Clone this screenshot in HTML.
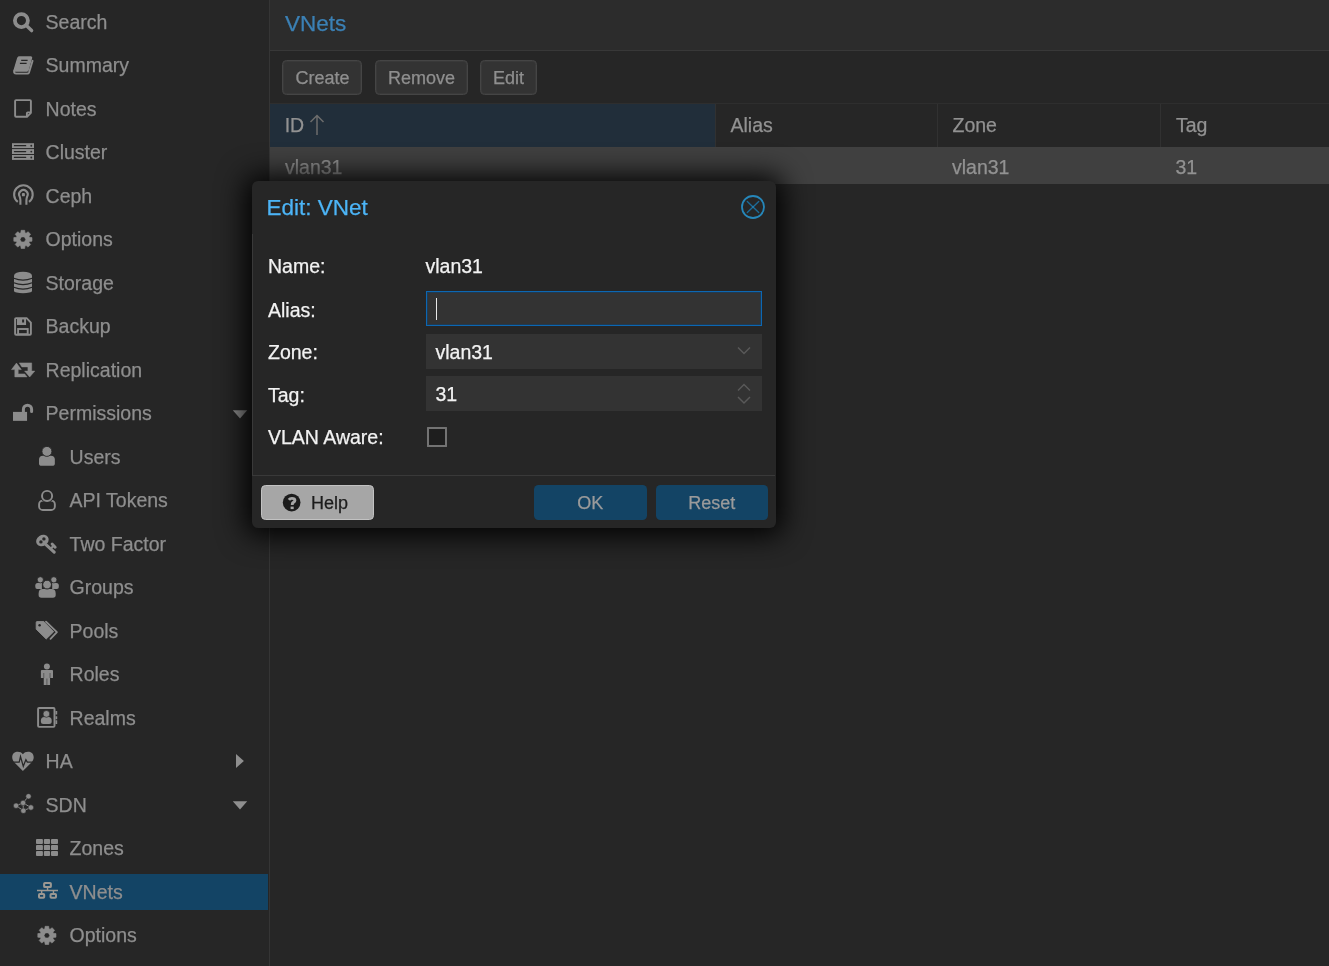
<!DOCTYPE html>
<html><head><meta charset="utf-8"><style>
*{margin:0;padding:0;box-sizing:border-box}
html,body{width:1329px;height:966px;overflow:hidden;background:#262626;font-family:"Liberation Sans",sans-serif}
.st,.gt,.lbl,.t,.btxt{-webkit-text-stroke:0.25px currentColor}
.abs{position:absolute}
.st{position:absolute;font-size:19.5px;line-height:19.5px;color:#8e8e8e;white-space:nowrap}
.ic{position:absolute;overflow:visible}
.sel{position:absolute;left:0;width:268px;height:36px;background:#134465}
#side{position:absolute;left:0;top:0;width:269px;height:966px;background:#262626}
#vb{position:absolute;left:269px;top:0;width:1px;height:966px;background:#353535}
#hdr{position:absolute;left:270px;top:0;width:1059px;height:51px;background:#2c2c2c;border-bottom:1px solid #383838}
.t{position:absolute;white-space:nowrap}
.btn{position:absolute;top:60px;height:35px;background:#333;border:1px solid #454545;box-shadow:inset 0 0 0 1px #393939;border-radius:4.5px}
.btxt{position:absolute;font-size:18px;line-height:18px;color:#8f8f8f;white-space:nowrap}
#gh{position:absolute;left:270px;top:103px;width:1059px;height:44px;background:#262626;border-top:1px solid #2e2e2e}
.hc{position:absolute;top:0;height:43px}
.sep{position:absolute;top:0;width:1px;height:43px;background:#313131}
#row{position:absolute;left:270px;top:147px;width:1059px;height:37px;background:#404040}
.gt{position:absolute;font-size:19.5px;line-height:19.5px;color:#929292;white-space:nowrap}
#dlg{position:absolute;left:251.5px;top:180.5px;width:524px;height:347px;background:#262626;border-radius:6px;box-shadow:0 1px 28px 7px rgba(0,0,0,0.95)}
.lbl{position:absolute;font-size:19.5px;line-height:19.5px;color:#f2f2f2;white-space:nowrap}
.inp{position:absolute;left:174.5px;width:336px;height:35px;background:#333}
.fbtn{position:absolute;top:304px;height:35px;border-radius:4.5px}
#wrap{position:absolute;left:0;top:0;width:1329px;height:966px;will-change:transform;background:#262626}
</style></head><body><div id="wrap">
<div id="side">
<div class="st" style="left:45.6px;top:12.59px">Search</div><div class="st" style="left:45.6px;top:56.09px">Summary</div><div class="st" style="left:45.6px;top:99.59px">Notes</div><div class="st" style="left:45.6px;top:143.09px">Cluster</div><div class="st" style="left:45.6px;top:186.59px">Ceph</div><div class="st" style="left:45.6px;top:230.09px">Options</div><div class="st" style="left:45.6px;top:273.59px">Storage</div><div class="st" style="left:45.6px;top:317.09px">Backup</div><div class="st" style="left:45.6px;top:360.59px">Replication</div><div class="st" style="left:45.6px;top:404.09px">Permissions</div><svg class="ic" style="left:232px;top:408.65px" width="16" height="10" viewBox="0 0 16 10"><path d="M0.8 1.2 H15.2 L8 9.5 Z" fill="#8f8f8f"/></svg><div class="st" style="left:69.6px;top:447.59px">Users</div><div class="st" style="left:69.6px;top:491.09px">API Tokens</div><div class="st" style="left:69.6px;top:534.59px">Two Factor</div><div class="st" style="left:69.6px;top:578.09px">Groups</div><div class="st" style="left:69.6px;top:621.59px">Pools</div><div class="st" style="left:69.6px;top:665.09px">Roles</div><div class="st" style="left:69.6px;top:708.59px">Realms</div><div class="st" style="left:45.6px;top:752.09px">HA</div><svg class="ic" style="left:235px;top:753.30px" width="10" height="16" viewBox="0 0 10 16"><path d="M1 1 V15 L8.9 8 Z" fill="#8f8f8f"/></svg><div class="st" style="left:45.6px;top:795.59px">SDN</div><svg class="ic" style="left:232px;top:800.15px" width="16" height="10" viewBox="0 0 16 10"><path d="M0.8 1.2 H15.2 L8 9.5 Z" fill="#8f8f8f"/></svg><div class="st" style="left:69.6px;top:839.09px">Zones</div><div class="sel" style="top:874.0px"></div><div class="st" style="left:69.6px;top:882.59px">VNets</div><div class="st" style="left:69.6px;top:926.09px">Options</div>
<svg class="ic" style="left:0;top:0" width="269" height="966" viewBox="0 0 269 966"><circle cx="21.4" cy="20.6" r="6.5" fill="none" stroke="#8c8c8c" stroke-width="3.8"/><path d="M26.6 25.8 L31.6 30.6" stroke="#8c8c8c" stroke-width="3.4" stroke-linecap="round"/><path d="M19.6 57 H30.8 Q31.8 57 31.5 58.1 L28.1 70 Q27.8 71 26.8 71 H14.8 Q13.9 71 14.2 70 L17.8 58 Q18.3 57 19.6 57Z" fill="#8c8c8c" stroke="#8c8c8c" stroke-width="1.3" stroke-linejoin="round"/><path d="M14.3 70.5 Q13.3 73.6 16.3 73.6 H27.3 Q28.6 73.6 29.1 72.3 L32.6 60.8" fill="none" stroke="#8c8c8c" stroke-width="1.9" stroke-linecap="round"/><path d="M21.2 60.4 H27.6 M19.9 63.4 H26.6" stroke="#262626" stroke-width="1.3"/><path d="M16.1 100.1 H29.9 Q30.9 100.1 30.9 101.1 V112.9 L27 116.8 H16.1 Q15.1 116.8 15.1 115.8 V101.1 Q15.1 100.1 16.1 100.1Z" fill="none" stroke="#8c8c8c" stroke-width="1.9" stroke-linejoin="round"/><path d="M30.9 112.4 H27.8 Q26.9 112.4 26.9 113.3 V116.8" fill="none" stroke="#8c8c8c" stroke-width="1.9"/><rect x="12" y="143.2" width="22" height="4.9" fill="#8c8c8c"/><path d="M14.4 145.64999999999998 H25.7" stroke="#262626" stroke-width="1.2" stroke-linecap="round"/><circle cx="31.3" cy="145.7" r="0.95" fill="#262626"/><rect x="12" y="149.1" width="22" height="4.9" fill="#8c8c8c"/><path d="M14.4 151.54999999999998 H25.7" stroke="#262626" stroke-width="1.2" stroke-linecap="round"/><circle cx="31.3" cy="151.6" r="0.95" fill="#262626"/><rect x="12" y="155.0" width="22" height="4.9" fill="#8c8c8c"/><path d="M14.4 157.45 H25.7" stroke="#262626" stroke-width="1.2" stroke-linecap="round"/><circle cx="31.3" cy="157.5" r="0.95" fill="#262626"/><path d="M17.8 201.9 A9.3 9.3 0 1 1 29.0 201.9" fill="none" stroke="#8c8c8c" stroke-width="2.1"/><path d="M20.4 204.8 V200.2 Q20.4 198.6 19.7 196.6 A4.3 4.3 0 1 1 27.1 196.6 Q26.4 198.6 26.4 200.2 V204.8" fill="none" stroke="#8c8c8c" stroke-width="2.1"/><rect x="21.9" y="193.1" width="3.0" height="3.2" rx="0.9" fill="#8c8c8c"/><path d="M20.80 232.83 L21.10 230.30 L24.70 230.30 L25.00 232.83 L26.06 233.27 L28.06 231.69 L30.61 234.24 L29.03 236.24 L29.47 237.30 L32.00 237.60 L32.00 241.20 L29.47 241.50 L29.03 242.56 L30.61 244.56 L28.06 247.11 L26.06 245.53 L25.00 245.97 L24.70 248.50 L21.10 248.50 L20.80 245.97 L19.74 245.53 L17.74 247.11 L15.19 244.56 L16.77 242.56 L16.33 241.50 L13.80 241.20 L13.80 237.60 L16.33 237.30 L16.77 236.24 L15.19 234.24 L17.74 231.69 L19.74 233.27Z M24.35 236.89 L21.45 236.89 L20.00 239.40 L21.45 241.91 L24.35 241.91 L25.80 239.40Z" fill="#8c8c8c" fill-rule="evenodd" stroke="#8c8c8c" stroke-width="0.6" stroke-linejoin="round"/><path d="M14 275.6 A9 3.9 0 0 1 32 275.6 V290.9 A9 2.4 0 0 1 14 290.9 Z" fill="#8c8c8c"/><path d="M13.8 278.20000000000005 Q23 281.90000000000003 32.2 278.20000000000005" fill="none" stroke="#262626" stroke-width="1.2"/><path d="M13.8 282.70000000000005 Q23 286.40000000000003 32.2 282.70000000000005" fill="none" stroke="#262626" stroke-width="1.2"/><path d="M13.8 287.20000000000005 Q23 290.90000000000003 32.2 287.20000000000005" fill="none" stroke="#262626" stroke-width="1.2"/><path d="M16.1 318.1 H26.6 L30.9 322.6 V333.8 Q30.9 334.8 29.9 334.8 H16.1 Q15.1 334.8 15.1 333.8 V319.1 Q15.1 318.1 16.1 318.1Z" fill="none" stroke="#8c8c8c" stroke-width="1.9" stroke-linejoin="round"/><path d="M16.9 319 H26.05 V324.9 H16.9Z M22.1 319.4 V322.6 H24.1 V319.4Z" fill="#8c8c8c" fill-rule="evenodd"/><rect x="18.1" y="329" width="9.6" height="5.2" fill="none" stroke="#8c8c8c" stroke-width="1.9"/><path d="M16.45 363.1 L21.3 369.6 H18.2 V373.9 H24.7 L27 376.9 H14.8 V369.6 H11.5Z" fill="#8c8c8c" stroke="#8c8c8c" stroke-width="0.5" stroke-linejoin="round"/><path d="M19.3 362.9 H31.7 V371.1 H34.8 L29.7 377 L24.6 371.1 H27.9 V366.9 H21.9Z" fill="#8c8c8c" stroke="#8c8c8c" stroke-width="0.5" stroke-linejoin="round"/><rect x="13" y="411.9" width="14.05" height="8.95" fill="#8c8c8c"/><path d="M23.4 412.2 V409.3 A4.1 4.1 0 0 1 31.6 409.3 V411.6" fill="none" stroke="#8c8c8c" stroke-width="3" stroke-linecap="round"/><path d="M39 463.2 V459.6 Q39 455.7 43 455.7 H50.8 Q54.85 455.7 54.85 459.6 V463.2 Q54.85 465.8 52.3 465.8 H41.5 Q39 465.8 39 463.2Z" fill="#8c8c8c"/><circle cx="46.9" cy="451.4" r="5.0" fill="#8c8c8c" stroke="#262626" stroke-width="0.9"/><rect x="39.1" y="500.6" width="15.75" height="9.4" rx="3.6" fill="none" stroke="#8c8c8c" stroke-width="1.9"/><circle cx="47.07" cy="495.9" r="6.7" fill="#262626"/><circle cx="47.07" cy="495.9" r="5.05" fill="none" stroke="#8c8c8c" stroke-width="1.95"/><path d="M45.9 544.6 L54.2 552.2" stroke="#8c8c8c" stroke-width="3.1" stroke-linecap="round"/><path d="M52.1 544.0 L55.2 547.2" stroke="#8c8c8c" stroke-width="2.9" stroke-linecap="round"/><path d="M50.7 548.7 L53.6 545.7" stroke="#8c8c8c" stroke-width="2.2"/><ellipse cx="42.4" cy="540.5" rx="6.6" ry="5.5" transform="rotate(-33 42.4 540.5)" fill="#8c8c8c"/><circle cx="40.9" cy="541.9" r="1.7" fill="#262626"/><circle cx="43.9" cy="538.9" r="1.7" fill="#262626"/><path d="M38.6 595 V593.5 Q38.6 589.05 42.6 589.05 H51.7 Q55.7 589.05 55.7 593.5 V595 Q55.7 597.8 52.9 597.8 H41.4 Q38.6 597.8 38.6 595Z" fill="#8c8c8c"/><path d="M35.3 587 V585.5 Q35.3 582.9 37.6 582.9 H41.9 V588.9 H37.2 Q35.3 588.9 35.3 587Z" fill="#8c8c8c"/><path d="M58.8 587 V585.5 Q58.8 582.9 56.5 582.9 H52.2 V588.9 H56.9 Q58.8 588.9 58.8 587Z" fill="#8c8c8c"/><circle cx="40.3" cy="579.8" r="3.1" fill="#8c8c8c" stroke="#262626" stroke-width="0.8"/><circle cx="53.85" cy="579.8" r="3.1" fill="#8c8c8c" stroke="#262626" stroke-width="0.8"/><circle cx="47.07" cy="584.6" r="4.4" fill="#8c8c8c" stroke="#262626" stroke-width="1.0"/><path d="M46.0 621.7 L56.9 632.2 L50.5 638.8" fill="none" stroke="#8c8c8c" stroke-width="1.85" stroke-linejoin="round" stroke-linecap="round"/><path d="M37 621.6 H43.9 L53.7 631.7 L46.2 639.0 L36.2 629.2 V622.4 Q36.2 621.6 37 621.6Z" fill="#8c8c8c" stroke="#8c8c8c" stroke-width="0.9" stroke-linejoin="round"/><circle cx="39.6" cy="625.3" r="1.25" fill="#262626"/><circle cx="46.9" cy="666.6" r="3.0" fill="#8c8c8c"/><path d="M41.9 669.9 H52.1 Q53 669.9 53 670.8 V678 H50.05 V685 H47.2 V678.5 H46.7 V685 H43.75 V678 H40.9 V670.8 Q40.9 669.9 41.9 669.9Z" fill="#8c8c8c"/><path d="M43.75 673 V678 M50.05 673 V678" stroke="#262626" stroke-width="0.5"/><rect x="38.1" y="708" width="16.4" height="18.85" rx="1" fill="none" stroke="#8c8c8c" stroke-width="1.95"/><path d="M55.5 711 H57.2 V714.6 H55.5Z M55.5 716.2 H57.2 V719.2 H55.5Z M55.5 720.2 H57.2 V723.9 H55.5Z" fill="#8c8c8c"/><path d="M40.9 721.4 V720.4 Q40.9 716.9 44.3 716.9 H48.3 Q51.7 716.9 51.7 720.4 V721.4 Q51.7 723.9 49.2 723.9 H43.4 Q40.9 723.9 40.9 721.4Z" fill="#8c8c8c"/><circle cx="46.4" cy="713.9" r="3.4" fill="#8c8c8c" stroke="#262626" stroke-width="0.7"/><path d="M22.9 754.2 C20.3 750.4 12.2 750.8 12.2 757.3 C12.2 759.4 13.2 761 14.2 762.3 L22.9 770.9 L31.7 762.3 C32.7 761 33.7 759.4 33.7 757.3 C33.7 750.8 25.5 750.4 22.9 754.2Z" fill="#8c8c8c"/><path d="M11.5 762.1 H19.2 L20.5 756.5 L23.3 766.3 L25.9 759.6 L27.3 762.1 H34.5" fill="none" stroke="#262626" stroke-width="1.25" stroke-linejoin="miter"/><path d="M23.1 802.9 L28.5 796.3 M23.1 802.9 L16.1 805.7 L23.4 810.7 L30.9 807.5 L23.1 802.9 L23.4 810.7" fill="none" stroke="#8c8c8c" stroke-width="1.0"/><circle cx="28.5" cy="796.3" r="2.65" fill="#8c8c8c" stroke="#262626" stroke-width="0.5"/><circle cx="23.1" cy="802.9" r="2.65" fill="#8c8c8c" stroke="#262626" stroke-width="0.5"/><circle cx="16.1" cy="805.7" r="2.65" fill="#8c8c8c" stroke="#262626" stroke-width="0.5"/><circle cx="23.4" cy="810.7" r="2.65" fill="#8c8c8c" stroke="#262626" stroke-width="0.5"/><circle cx="30.9" cy="807.5" r="2.65" fill="#8c8c8c" stroke="#262626" stroke-width="0.5"/><rect x="36" y="839" width="6.90" height="4.90" rx="0.9" fill="#8c8c8c"/><rect x="36" y="845.1" width="6.90" height="4.95" rx="0.9" fill="#8c8c8c"/><rect x="36" y="851" width="6.90" height="5.00" rx="0.9" fill="#8c8c8c"/><rect x="43.9" y="839" width="6.15" height="4.90" rx="0.9" fill="#8c8c8c"/><rect x="43.9" y="845.1" width="6.15" height="4.95" rx="0.9" fill="#8c8c8c"/><rect x="43.9" y="851" width="6.15" height="5.00" rx="0.9" fill="#8c8c8c"/><rect x="51" y="839" width="7.00" height="4.90" rx="0.9" fill="#8c8c8c"/><rect x="51" y="845.1" width="7.00" height="4.95" rx="0.9" fill="#8c8c8c"/><rect x="51" y="851" width="7.00" height="5.00" rx="0.9" fill="#8c8c8c"/><rect x="44.15" y="883.05" width="6.7" height="4.0" rx="0.8" fill="none" stroke="#9c9892" stroke-width="2.1"/><path d="M47.55 888 V890.5 M37 890.45 H58 M41.65 890.5 V893 M53.45 890.5 V893" fill="none" stroke="#9c9892" stroke-width="1.45"/><rect x="39" y="893.9" width="5.2" height="3.95" rx="0.8" fill="none" stroke="#9c9892" stroke-width="2"/><rect x="50.55" y="893.9" width="5.45" height="3.95" rx="0.8" fill="none" stroke="#9c9892" stroke-width="2"/><path d="M44.80 928.83 L45.10 926.30 L48.70 926.30 L49.00 928.83 L50.06 929.27 L52.06 927.69 L54.61 930.24 L53.03 932.24 L53.47 933.30 L56.00 933.60 L56.00 937.20 L53.47 937.50 L53.03 938.56 L54.61 940.56 L52.06 943.11 L50.06 941.53 L49.00 941.97 L48.70 944.50 L45.10 944.50 L44.80 941.97 L43.74 941.53 L41.74 943.11 L39.19 940.56 L40.77 938.56 L40.33 937.50 L37.80 937.20 L37.80 933.60 L40.33 933.30 L40.77 932.24 L39.19 930.24 L41.74 927.69 L43.74 929.27Z M48.35 932.89 L45.45 932.89 L44.00 935.40 L45.45 937.91 L48.35 937.91 L49.80 935.40Z" fill="#8c8c8c" fill-rule="evenodd" stroke="#8c8c8c" stroke-width="0.6" stroke-linejoin="round"/></svg>
</div>
<div id="vb"></div>
<div id="hdr"><div class="t" style="left:15px;top:12.80px;font-size:22.5px;line-height:22.5px;color:#3b80b5">VNets</div></div>
<div class="btn" style="left:282px;width:80px"></div>
<div class="btxt" style="left:295.5px;top:68.76px">Create</div>
<div class="btn" style="left:375px;width:93px"></div>
<div class="btxt" style="left:388px;top:68.76px">Remove</div>
<div class="btn" style="left:480px;width:57px"></div>
<div class="btxt" style="left:493px;top:68.76px">Edit</div>
<div id="gh">
 <div class="hc" style="left:0;width:445px;background:#212e3a"></div>
 <div class="sep" style="left:445px"></div>
 <div class="sep" style="left:667px"></div>
 <div class="sep" style="left:890px"></div>
</div>
<div class="gt" style="left:284.7px;top:116.39px">ID</div>
<svg class="ic" style="left:309px;top:114px" width="16" height="22" viewBox="0 0 16 22"><path d="M8 1.5 V21 M1.5 8 L8 1.5 L14.5 8" stroke="#6c6c6c" stroke-width="1.5" fill="none"/></svg>
<div class="gt" style="left:730.5px;top:116.39px">Alias</div>
<div class="gt" style="left:952.5px;top:116.39px">Zone</div>
<div class="gt" style="left:1176px;top:116.39px">Tag</div>
<div id="row"></div>
<div class="gt" style="left:285px;top:158.09px">vlan31</div>
<div class="gt" style="left:952px;top:158.09px">vlan31</div>
<div class="gt" style="left:1175.5px;top:158.09px">31</div>

<div id="dlg">
 <div class="t" style="left:15px;top:16.65px;font-size:22.5px;line-height:22.5px;color:#4cb4f6">Edit: VNet</div>
 <svg class="ic" style="left:488.5px;top:13.4px" width="26" height="26" viewBox="0 0 26 26"><circle cx="13" cy="13" r="11" stroke="#2687ba" stroke-width="1.8" fill="none"/><path d="M7.3 7.5 L18.7 18.5 M18.7 7.5 L7.3 18.5" stroke="#1c6b98" stroke-width="1.35" stroke-linecap="round"/><circle cx="13" cy="13" r="1" fill="#2080b3"/></svg>
 <div class="abs" style="left:0.5px;top:53.5px;width:1px;height:241px;background:#393939"></div>
 <div class="abs" style="left:0.5px;top:294.5px;width:523px;height:1px;background:#393939"></div>
 <div class="lbl" style="left:16.5px;top:76.79px">Name:</div>
 <div class="lbl" style="left:174px;top:76.79px">vlan31</div>
 <div class="lbl" style="left:16.5px;top:120.69px">Alias:</div>
 <div class="inp" style="top:110.5px;border:1px solid #0c67b3;box-shadow:inset 0 0 0 1px #213a50"></div>
 <div class="abs" style="left:184.5px;top:117.5px;width:1.3px;height:22px;background:#e8e8e8"></div>
 <div class="lbl" style="left:16.5px;top:162.59px">Zone:</div>
 <div class="inp" style="top:153.5px"></div>
 <div class="lbl" style="left:184px;top:162.59px">vlan31</div>
 <svg class="ic" style="left:485.5px;top:165.5px" width="14" height="10" viewBox="0 0 14 10"><path d="M1 1.5 L7 7.5 L13 1.5" stroke="#595959" stroke-width="1.45" fill="none"/></svg>
 <div class="lbl" style="left:16.5px;top:205.79px">Tag:</div>
 <div class="inp" style="top:195.5px"></div>
 <div class="lbl" style="left:184px;top:204.09px">31</div>
 <svg class="ic" style="left:485.5px;top:201.5px" width="14" height="24" viewBox="0 0 14 24"><path d="M1 8.5 L7 2.5 L13 8.5 M1 15 L7 21 L13 15" stroke="#595959" stroke-width="1.45" fill="none"/></svg>
 <div class="lbl" style="left:16.5px;top:247.79px">VLAN Aware:</div>
 <div class="abs" style="left:175.5px;top:246.5px;width:20px;height:20px;border:2px solid #737373;background:#1e1e1e;border-radius:0.5px"></div>
 <div class="fbtn" style="left:9.5px;width:113px;background:#a6a6a6;border:1.2px solid #c2c2c2"></div>
 <svg class="ic" style="left:0;top:0" width="524" height="346" viewBox="251.5 180.5 524 346"><circle cx="291.15" cy="502.05" r="8.85" fill="#1c1c1c"/><path d="M288.4 499.4 Q289.4 497.9 291.4 497.9 Q294.4 497.9 294.4 499.9 Q294.4 501.1 292.9 501.9 Q291.8 502.5 291.8 503.6 V504.6" fill="none" stroke="#a6a6a6" stroke-width="2.9" stroke-linecap="butt" stroke-linejoin="round"/><rect x="290.1" y="506.1" width="3.1" height="2.5" fill="#a6a6a6"/></svg>
 <div class="t" style="left:59.5px;top:313.96px;font-size:18px;line-height:18px;color:#1c1c1c">Help</div>
 <div class="fbtn" style="left:282.5px;width:113px;background:#134465"></div>
 <div class="t" style="left:325.7px;top:313.96px;font-size:18px;line-height:18px;color:#9b9b9b">OK</div>
 <div class="fbtn" style="left:404.5px;width:112px;background:#134465"></div>
 <div class="t" style="left:436.7px;top:313.96px;font-size:18px;line-height:18px;color:#9b9b9b">Reset</div>
</div>
</div></body></html>
